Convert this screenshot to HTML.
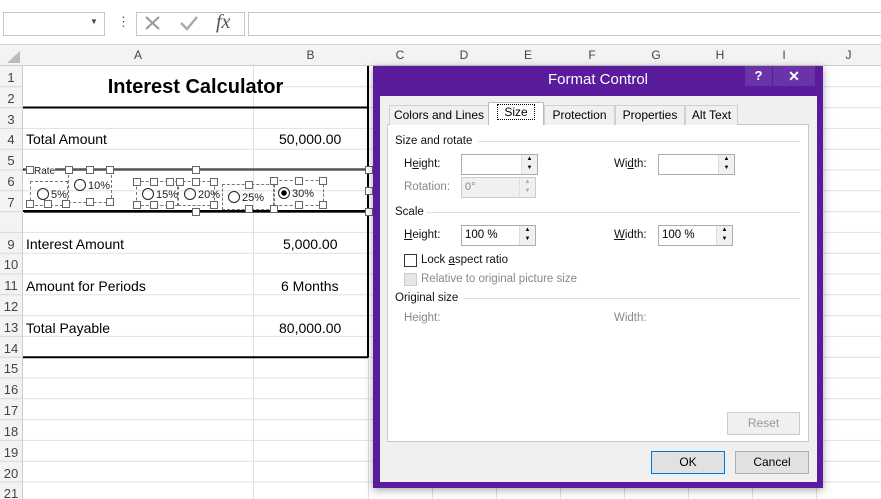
<!DOCTYPE html><html><head><style>
body{margin:0;width:881px;height:499px;position:relative;overflow:hidden;background:#fff;font-family:"Liberation Sans",sans-serif;}
.a{position:absolute;}
.rh{position:absolute;left:0;width:22px;text-align:center;font-size:13px;color:#444;background:#f3f3f3;border-right:1px solid #ccc;}
.ch{position:absolute;top:46px;height:19px;font-size:12px;color:#444;text-align:center;line-height:19px;border-right:1px solid #d4d4d4;background:#f3f3f3}
.t{position:absolute;font-size:14px;color:#000}
.h{position:absolute;width:6px;height:6px;border:1px solid #666;background:#fff}
.rad{position:absolute;font-size:11px;color:#222}
.rad i{display:inline-block;width:10px;height:10px;border:1px solid #222;border-radius:50%;vertical-align:-2px;margin-right:2px;position:relative}
.d{font-size:11.5px;color:#111;position:absolute}
.g{color:#888}
.sp{position:absolute;height:19px;border:1px solid #abadb3;background:#fff;}
.sp b{position:absolute;right:0;top:0;width:15px;height:19px;border-left:1px solid #ddd;background:#f0f0f0;font-size:6px;line-height:9px;text-align:center;font-weight:normal}
.btn{position:absolute;height:21px;border:1px solid #adadad;background:#e1e1e1;font-size:12px;text-align:center;line-height:21px}
.tab{position:absolute;top:105px;height:19px;border:1px solid #d0d0d0;border-bottom:none;background:#f0f0f0;font-size:12px;line-height:19px;text-align:center}
</style></head><body>
<!-- formula bar -->
<div class="a" style="left:0;top:0;width:881px;height:44px;background:#fff;border-bottom:1px solid #d4d4d4"></div>
<div class="a" style="left:3px;top:12px;width:100px;height:22px;border:1px solid #c6c6c6"></div>
<div class="a" style="left:90px;top:17px;font-size:8px;color:#444">▼</div>
<div class="a" style="left:117px;top:14px;font-size:13px;color:#555">⋮</div>
<div class="a" style="left:136px;top:12px;width:107px;height:22px;border:1px solid #c6c6c6"></div>
<svg class="a" style="left:143px;top:15px" width="20" height="16"><path d="M3 2L16 14M16 2L3 14" stroke="#999" stroke-width="2"/></svg>
<svg class="a" style="left:178px;top:15px" width="22" height="16"><path d="M3 8L9 14L19 2" stroke="#aaa" stroke-width="2.5" fill="none"/></svg>
<div class="a" style="left:216px;top:11px;font-family:'Liberation Serif',serif;font-style:italic;font-size:20px;color:#555">fx</div>
<div class="a" style="left:248px;top:12px;width:640px;height:22px;border:1px solid #c6c6c6"></div>
<!-- headers -->
<div class="a" style="left:0;top:45px;width:881px;height:20px;background:#f3f3f3;border-bottom:1px solid #ccc"></div>
<svg class="a" style="left:5px;top:50px" width="16" height="14"><path d="M15 1V13H2Z" fill="#bbb"/></svg>
<div class="ch" style="left:23px;width:230px">A</div><div class="ch" style="left:253px;width:115px">B</div>
<div class="ch" style="left:368px;width:64px">C</div><div class="ch" style="left:432px;width:64px">D</div>
<div class="ch" style="left:496px;width:64px">E</div><div class="ch" style="left:560px;width:64px">F</div>
<div class="ch" style="left:624px;width:64px">G</div><div class="ch" style="left:688px;width:64px">H</div>
<div class="ch" style="left:752px;width:64px">I</div><div class="ch" style="left:816px;width:65px">J</div>
<svg class="a" style="left:0;top:66px" width="881" height="433">
<g stroke="#e0e0e0" stroke-width="1">
<path d="M253.5 0V433M368.5 0V433M432.5 0V433M496.5 0V433M560.5 0V433M624.5 0V433M688.5 0V433M752.5 0V433M816.5 0V433"/>
<path d="M0 20.8H881M0 41.6H881M0 62.4H881M0 83.2H881M0 104H881M0 124.8H881M0 145.6H881M0 166.4H881M0 187.2H881M0 208H881M0 228.8H881M0 249.6H881M0 270.4H881M0 291.2H881M0 312H881M0 332.8H881M0 353.6H881M0 374.4H881M0 395.2H881M0 416H881" />
</g>
<rect x="0" y="0" width="22.5" height="433" fill="#f3f3f3"/>
<path d="M22.5 0V433" stroke="#ccc"/>
<path d="M0 20.8H22M0 41.6H22M0 62.4H22M0 83.2H22M0 104H22M0 124.8H22M0 145.6H22M0 166.4H22M0 187.2H22M0 208H22M0 228.8H22M0 249.6H22M0 270.4H22M0 291.2H22M0 312H22M0 332.8H22M0 353.6H22M0 374.4H22M0 395.2H22M0 416H22" stroke="#d8d8d8"/>
<rect x="23" y="0" width="230" height="41" fill="#fff"/>
<path d="M23 41.5H368M368 0V291.5M23 291.2H368M23 103.5H368M23 145H368" stroke="#000" stroke-width="2" fill="none"/>
<g font-family="Liberation Sans" font-size="13" fill="#444" text-anchor="middle">
<text x="11" y="16">1</text><text x="11" y="37">2</text><text x="11" y="58">3</text><text x="11" y="78">4</text><text x="11" y="99">5</text><text x="11" y="120">6</text><text x="11" y="141">7</text>
<text x="11" y="183">9</text><text x="11" y="203">10</text><text x="11" y="224">11</text><text x="11" y="245">12</text><text x="11" y="266">13</text><text x="11" y="287">14</text><text x="11" y="307">15</text><text x="11" y="328">16</text><text x="11" y="349">17</text><text x="11" y="370">18</text><text x="11" y="391">19</text><text x="11" y="412">20</text><text x="11" y="432">21</text></g>
</svg>
<div class="t" style="left:23px;width:345px;top:76px;text-align:center;font-size:20px;font-weight:bold">Interest Calculator</div>
<div class="t" style="left:26px;top:131px">Total Amount</div><div class="t" style="left:279px;top:131px">50,000.00</div>
<div class="t" style="left:26px;top:236px">Interest Amount</div><div class="t" style="left:283px;top:236px">5,000.00</div>
<div class="t" style="left:26px;top:278px">Amount for Periods</div><div class="t" style="left:281px;top:278px">6 Months</div>
<div class="t" style="left:26px;top:320px">Total Payable</div><div class="t" style="left:279px;top:320px">80,000.00</div>
<!-- option group -->
<div class="a" style="left:24px;top:169px;width:344px;height:42px;border-top:1px solid #555;border-bottom:1px solid #555"></div>
<div class="a" style="left:34px;top:166px;font-size:10px;background:#fff;color:#222">Rate</div>
<div class="a" style="left:30px;top:181px;width:36px;height:23px;border:1px dashed #777"></div>
<div class="a" style="left:68px;top:170px;width:42px;height:31px;border:1px dashed #777"></div>
<div class="a" style="left:136px;top:181px;width:40px;height:23px;border:1px dashed #777"></div>
<div class="a" style="left:178px;top:181px;width:35px;height:23px;border:1px dashed #777"></div>
<div class="a" style="left:222px;top:184px;width:50px;height:24px;border:1px dashed #777"></div>
<div class="a" style="left:274px;top:180px;width:48px;height:24px;border:1px dashed #777"></div>
<div class="rad" style="left:37px;top:188px"><i></i>5%</div>
<div class="rad" style="left:74px;top:179px"><i></i>10%</div>
<div class="rad" style="left:142px;top:188px"><i></i>15%</div>
<div class="rad" style="left:184px;top:188px"><i></i>20%</div>
<div class="rad" style="left:228px;top:191px"><i></i>25%</div>
<div class="rad" style="left:278px;top:187px"><i style="background:radial-gradient(#000 2.5px,#fff 3px)"></i>30%</div>
<div class="h" style="left:26px;top:166px"></div><div class="h" style="left:65px;top:166px"></div><div class="h" style="left:86px;top:166px"></div><div class="h" style="left:106px;top:166px"></div>
<div class="h" style="left:192px;top:166px"></div><div class="h" style="left:365px;top:166px"></div><div class="h" style="left:365px;top:187px"></div><div class="h" style="left:365px;top:208px"></div>
<div class="h" style="left:26px;top:200px"></div><div class="h" style="left:44px;top:200px"></div><div class="h" style="left:62px;top:200px"></div><div class="h" style="left:86px;top:198px"></div><div class="h" style="left:106px;top:198px"></div>
<div class="h" style="left:133px;top:178px"></div><div class="h" style="left:150px;top:178px"></div><div class="h" style="left:166px;top:178px"></div><div class="h" style="left:176px;top:178px"></div><div class="h" style="left:192px;top:178px"></div><div class="h" style="left:210px;top:178px"></div>
<div class="h" style="left:133px;top:201px"></div><div class="h" style="left:150px;top:201px"></div><div class="h" style="left:166px;top:201px"></div><div class="h" style="left:192px;top:208px"></div><div class="h" style="left:210px;top:201px"></div>
<div class="h" style="left:245px;top:181px"></div><div class="h" style="left:270px;top:177px"></div><div class="h" style="left:295px;top:177px"></div><div class="h" style="left:319px;top:177px"></div>
<div class="h" style="left:245px;top:205px"></div><div class="h" style="left:270px;top:205px"></div><div class="h" style="left:295px;top:201px"></div><div class="h" style="left:319px;top:201px"></div>
<!-- dialog -->
<div class="a" style="left:373px;top:66px;width:450px;height:422px;background:#5a1c9d;box-shadow:0 2px 8px rgba(0,0,0,.35)"></div>
<div class="a" style="left:373px;top:71px;width:450px;text-align:center;font-size:15px;color:#fff">Format Control</div>
<div class="a" style="left:745px;top:66px;width:27px;height:20px;background:#6a34a8;color:#fff;font-weight:bold;font-size:13px;text-align:center;line-height:20px">?</div>
<div class="a" style="left:773px;top:66px;width:42px;height:20px;background:#6a34a8;color:#fff;font-weight:bold;font-size:14px;text-align:center;line-height:20px">✕</div>
<div class="a" style="left:380px;top:96px;width:437px;height:386px;background:#f0f0f0"></div>
<div class="a" style="left:387px;top:124px;width:420px;height:316px;background:#fff;border:1px solid #c8c8c8"></div>
<div class="tab" style="left:389px;width:98px">Colors and Lines</div>
<div class="tab" style="left:488px;top:102px;height:22px;width:54px;background:#fff;border-color:#bbb"><span style="border:1px dotted #000;padding:0 6px">Size</span></div>
<div class="tab" style="left:544px;width:69px">Protection</div>
<div class="tab" style="left:615px;width:68px">Properties</div>
<div class="tab" style="left:685px;width:51px">Alt Text</div>
<div class="d" style="left:395px;top:135px">Size and rotate</div><div class="a" style="left:478px;top:141px;width:322px;border-top:1px solid #ddd"></div>
<div class="d" style="left:404px;top:158px">H<u>e</u>ight:</div>
<div class="sp" style="left:461px;top:154px;width:75px"><b>▲<br>▼</b></div>
<div class="d" style="left:614px;top:158px">Wi<u>d</u>th:</div>
<div class="sp" style="left:658px;top:154px;width:75px"><b>▲<br>▼</b></div>
<div class="d g" style="left:404px;top:181px">Rotation:</div>
<div class="sp g" style="left:461px;top:177px;width:75px;background:#f0f0f0;border-color:#ccc;font-size:11px;line-height:19px;padding-left:3px;box-sizing:border-box;height:21px">0°<b style="color:#aaa">▲<br>▼</b></div>
<div class="d" style="left:395px;top:206px">Scale</div><div class="a" style="left:426px;top:212px;width:374px;border-top:1px solid #ddd"></div>
<div class="d" style="left:404px;top:229px"><u>H</u>eight:</div>
<div class="sp" style="left:461px;top:225px;width:75px;font-size:11.5px;line-height:19px;padding-left:3px;box-sizing:border-box;height:21px">100 %<b>▲<br>▼</b></div>
<div class="d" style="left:614px;top:229px"><u>W</u>idth:</div>
<div class="sp" style="left:658px;top:225px;width:75px;font-size:11.5px;line-height:19px;padding-left:3px;box-sizing:border-box;height:21px">100 %<b>▲<br>▼</b></div>
<div class="a" style="left:404px;top:254px;width:11px;height:11px;border:1px solid #333;background:#fff"></div>
<div class="d" style="left:421px;top:254px">Lock <u>a</u>spect ratio</div>
<div class="a" style="left:404px;top:273px;width:11px;height:11px;border:1px solid #ccc;background:#e6e6e6"></div>
<div class="d g" style="left:421px;top:273px">Relative to original picture size</div>
<div class="d" style="left:395px;top:292px">Original size</div><div class="a" style="left:463px;top:298px;width:337px;border-top:1px solid #ddd"></div>
<div class="d g" style="left:404px;top:312px">Height:</div><div class="d g" style="left:614px;top:312px">Width:</div>
<div class="btn" style="left:727px;top:412px;width:71px;background:#f0f0f0;border-color:#ccc;color:#999">Reset</div>
<div class="btn" style="left:651px;top:451px;width:72px;border-color:#0078d7">OK</div>
<div class="btn" style="left:735px;top:451px;width:72px">Cancel</div>
</body></html>
